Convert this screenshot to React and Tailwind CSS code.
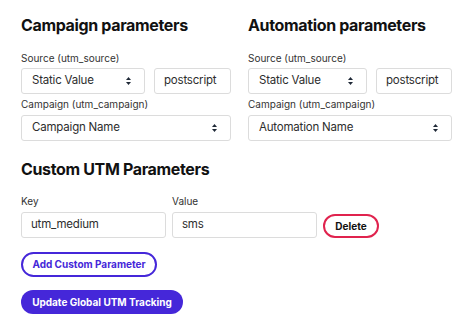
import React from 'react';

const Chevrons = () => (
  <svg width="7" height="10" viewBox="0 0 7 10" className="shrink-0">
    <path d="M3.5 1 L6 4 H1 Z" fill="#1f2937" />
    <path d="M3.5 9 L6 6 H1 Z" fill="#1f2937" />
  </svg>
);

const Select = ({ value, className = '' }) => (
  <div className={`h-[26px] flex items-center justify-between pl-[10px] pr-[12px] border border-[#dcdcdc] rounded-[3px] bg-white text-[11.5px] tracking-[-0.2px] text-[#2d2d2d] ${className}`}>
    <span>{value}</span>
    <Chevrons />
  </div>
);

const Input = ({ value, className = '' }) => (
  <div className={`h-[26px] flex items-center px-[9px] border border-[#dcdcdc] rounded-[3px] bg-white text-[11.5px] tracking-[-0.2px] text-[#2d2d2d] ${className}`}>
    {value}
  </div>
);

const Label = ({ children, className = '' }) => (
  <div className={`text-[10px] text-[#333] leading-none ${className}`}>{children}</div>
);

const ParamGroup = ({ title, nameLabel, widths }) => (
  <div className="flex flex-col">
    <h2 className="text-[16px] font-bold text-[#111] leading-none tracking-[-0.35px]">{title}</h2>
    <Label className="mt-[20px]">Source (utm_source)</Label>
    <div className="mt-[5px] flex gap-[9px]">
      <Select value="Static Value" className={widths[0]} />
      <Input value="postscript" className={widths[1]} />
    </div>
    <Label className="mt-[5px]">Campaign (utm_campaign)</Label>
    <Select value={nameLabel} className="mt-[6px] w-full" />
  </div>
);

export default function App() {
  return (
    <div className="w-[474px] h-[331px] bg-white pl-[21px] pt-[17px]" style={{ fontFamily: 'Inter, "Noto Sans", sans-serif' }}>
      <div className="flex gap-[17px]">
        <div className="w-[210px]">
          <ParamGroup title="Campaign parameters" nameLabel="Campaign Name" widths={['w-[124px]', 'w-[77px]']} />
        </div>
        <div className="w-[204px]">
          <ParamGroup title="Automation parameters" nameLabel="Automation Name" widths={['w-[119px]', 'w-[76px]']} />
        </div>
      </div>

      <h2 className="mt-[20px] text-[16px] font-bold text-[#111] leading-none tracking-[-0.35px]">Custom UTM Parameters</h2>
      <div className="mt-[19px] flex items-end gap-[6px]">
        <div className="flex flex-col w-[145px]">
          <Label>Key</Label>
          <Input value="utm_medium" className="mt-[6px]" />
        </div>
        <div className="flex flex-col w-[145px]">
          <Label>Value</Label>
          <Input value="sms" className="mt-[6px]" />
        </div>
        <button className="h-[24px] w-[56px] rounded-full border-2 border-[#e0234e] bg-white text-[10px] font-bold text-[#111]">
          Delete
        </button>
      </div>

      <button className="mt-[14px] block h-[25px] w-[136px] rounded-full border-2 border-[#4527d9] bg-white text-[10px] font-bold text-[#4527d9]">
        Add Custom Parameter
      </button>
      <button className="mt-[13px] block h-[24px] w-[162px] rounded-full bg-[#4527d9] text-[10px] font-bold text-white">
        Update Global UTM Tracking
      </button>
    </div>
  );
}
